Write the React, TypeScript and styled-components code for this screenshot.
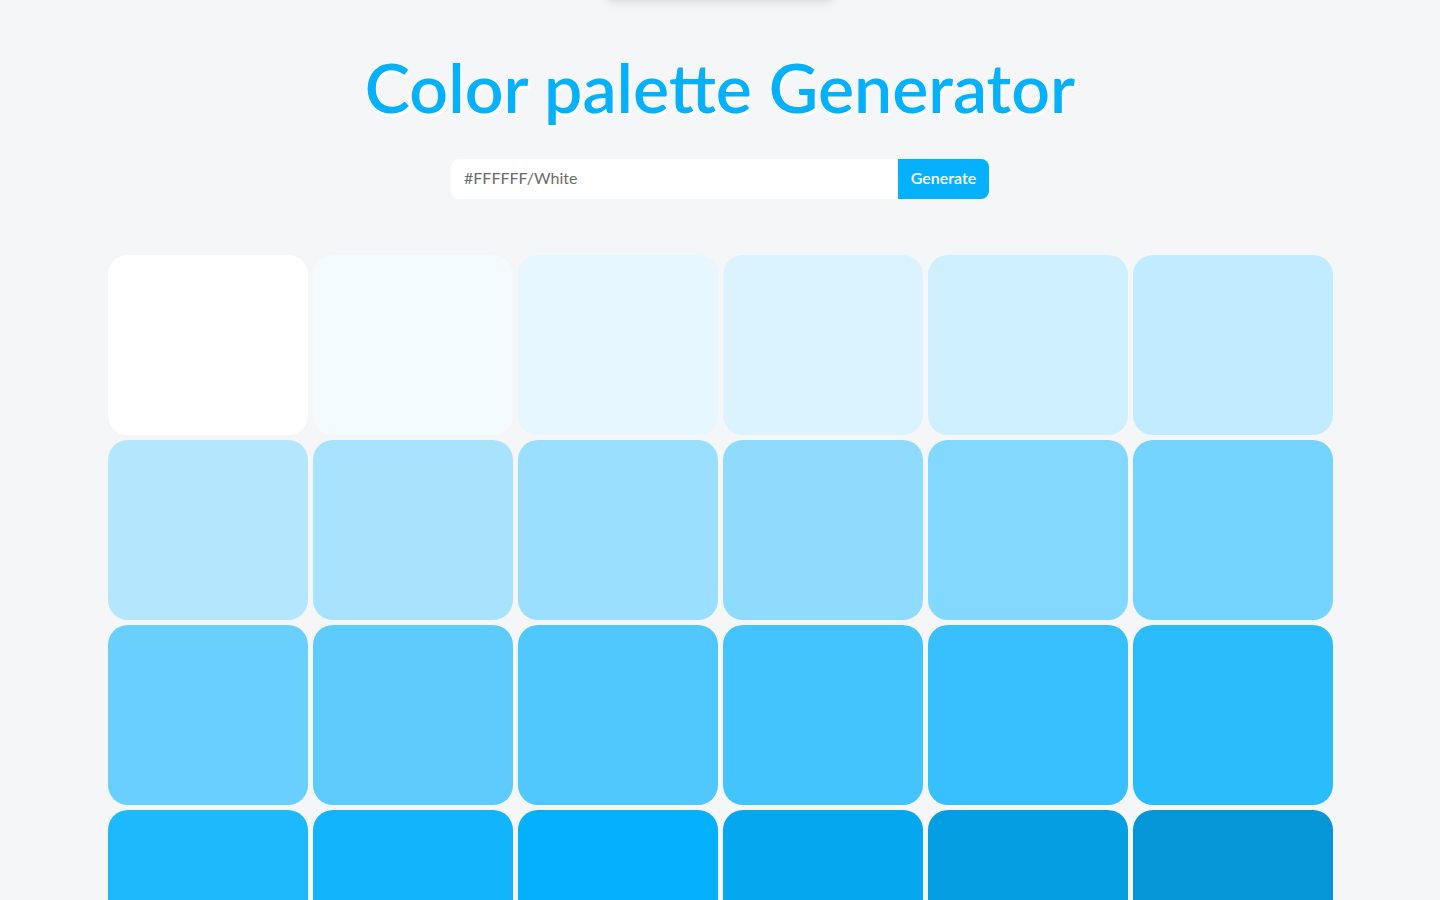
import React, { useState } from 'react'
import styled, { createGlobalStyle } from 'styled-components'

const GlobalStyle = createGlobalStyle`
  * {
    box-sizing: border-box;
  }

  body {
    margin: 0;
    background: #f5f6f8;
    font-family: 'Lato', 'Liberation Sans', sans-serif;
    overflow: hidden;
  }
`

const Page = styled.main`
  display: flex;
  flex-direction: column;
  align-items: center;
  min-height: 100vh;
  padding-top: 53px;
`

const Toast = styled.div`
  position: fixed;
  top: 0;
  left: 50%;
  width: 230px;
  height: 48px;
  transform: translate(-50%, -100%);
  background: #ffffff;
  border-radius: 8px;
  box-shadow: 0 2px 10px rgba(0, 0, 0, 0.12);
`

const Title = styled.h1`
  margin: 0;
  font-size: 68px;
  font-weight: 600;
  line-height: 1;
  color: #05b0fc;
  text-shadow: 2px 3px 0 #ffffff;
`

const Form = styled.form`
  display: flex;
  margin-top: 38px;
  width: 538px;
  height: 40px;
`

const ColorInput = styled.input`
  flex: 1;
  border: none;
  border-radius: 8px 0 0 8px;
  background: #ffffff;
  padding: 0 13px 3px;
  font-family: inherit;
  font-size: 16px;
  color: #333;
  outline: none;

  &::placeholder {
    color: #6b6b6b;
  }
`

const GenerateButton = styled.button`
  width: 91px;
  border: none;
  border-radius: 0 8px 8px 0;
  background: #05b0fc;
  padding: 0 0 3px;
  color: #ffffff;
  font-family: inherit;
  font-size: 16px;
  font-weight: 600;
  cursor: pointer;
`

const Grid = styled.section`
  display: grid;
  grid-template-columns: repeat(6, 200px);
  grid-auto-rows: 180px;
  gap: 5px;
  margin-top: 56px;
`

const Swatch = styled.div<{ $color: string }>`
  background: ${p => p.$color};
  border-radius: 20px;
  cursor: pointer;
`

const mix = (a: number[], b: number[], w: number) =>
  '#' + a.map((v, i) => Math.round(v * w + b[i] * (1 - w)).toString(16).padStart(2, '0')).join('')

const BASE = [5, 176, 252]

// 20 tints from white to the base colour, then a few shades towards black
const buildPalette = () => {
  const colors: string[] = []
  for (let i = 0; i <= 20; i++) colors.push(mix(BASE, [255, 255, 255], i / 20))
  for (let i = 1; i <= 9; i++) colors.push(mix(BASE, [0, 0, 0], 1 - i * 0.05))
  return colors
}

export default function App() {
  const [value, setValue] = useState('')
  const palette = buildPalette()

  return (
    <>
      <GlobalStyle />
      <Toast />
      <Page>
        <Title>Color palette Generator</Title>
        <Form onSubmit={e => e.preventDefault()}>
          <ColorInput
            type="text"
            placeholder="#FFFFFF/White"
            value={value}
            onChange={e => setValue(e.target.value)}
          />
          <GenerateButton type="submit">Generate</GenerateButton>
        </Form>
        <Grid>
          {palette.map(c => (
            <Swatch key={c} $color={c} />
          ))}
        </Grid>
      </Page>
    </>
  )
}
